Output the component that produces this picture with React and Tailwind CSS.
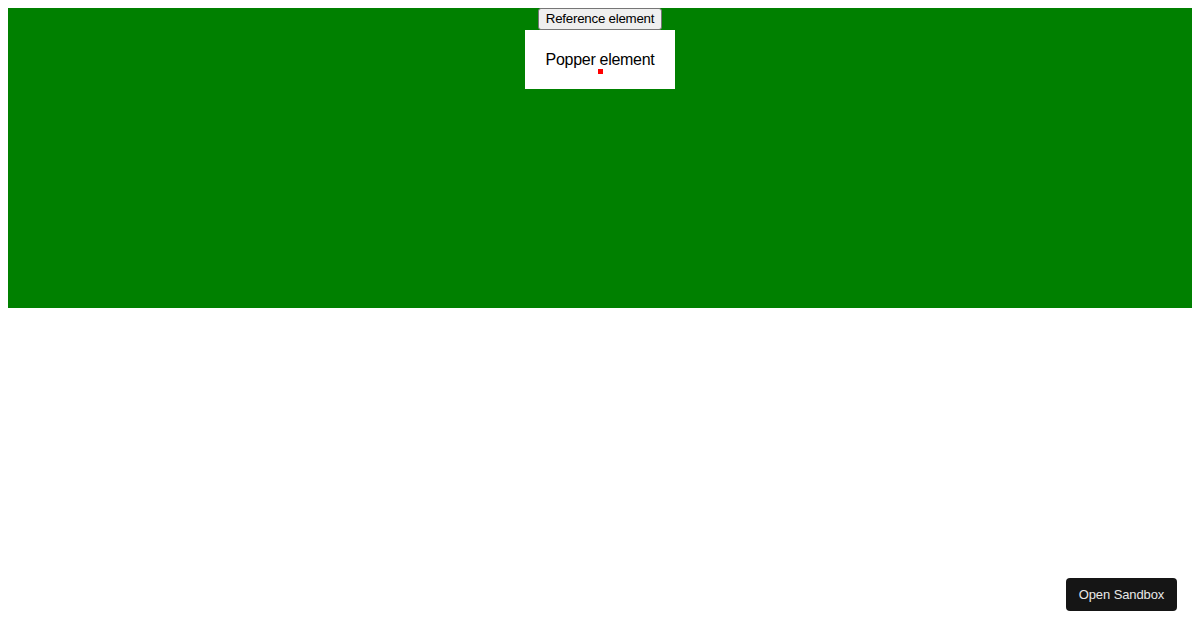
export default function App() {
  return (
    <div className="p-2 bg-white min-h-[630px] font-['Liberation_Sans',Arial,sans-serif] text-black">
      {/* green stage with reference button */}
      <div className="relative h-[300px] bg-[#008000] flex justify-center items-start">
        <div className="relative flex flex-col items-center">
          <button className="h-[22px] w-[124px] pb-[1px] text-[13.33px] leading-[15px] tracking-[-0.25px] bg-[#efefef] border border-[#767676] rounded-[3px] text-black">
            Reference element
          </button>
          <div className="absolute top-[22px] left-1/2 -translate-x-1/2 w-[150px] bg-white py-5 text-center text-[16px] leading-[19px] tracking-[-0.3px]">
            Popper element
            <div className="absolute left-[73px] top-[39px] w-[5px] h-[5px] bg-[#ff0000]" />
          </div>
        </div>
      </div>

      <button className="fixed right-[23px] bottom-[19px] w-[111px] h-[33px] rounded-[4px] bg-[#151515] text-[#e8e8e8] text-[13px] tracking-[-0.1px] font-['Liberation_Sans',Arial,sans-serif]">
        Open Sandbox
      </button>
    </div>
  );
}
